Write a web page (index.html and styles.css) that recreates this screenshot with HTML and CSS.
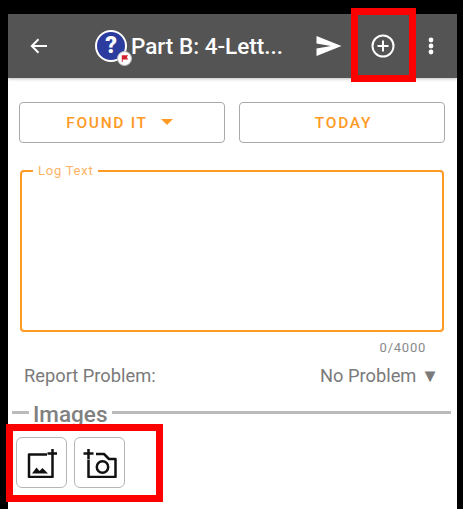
FILE: index.html
```html
<!DOCTYPE html>
<html lang="en">
<head>
<meta charset="utf-8">
<title>Log</title>
<link rel="stylesheet" href="styles.css">
</head>
<body>
<div class="screen">
  <header class="bar">
    <svg class="back" viewBox="0 0 24 24" width="24" height="24"><path d="M20 12H5M11.500 5.200 4.800 12l6.700 6.800" fill="none" stroke="#fff" stroke-width="2"/></svg>
    <div class="type">
      <div class="type-circle">?</div>
      <div class="flag"><svg viewBox="0 0 10 10" width="9" height="9"><path d="M2 1.500h7L7.600 3.600 9 6H3v3H2z" fill="#d3202c"/></svg></div>
    </div>
    <div class="title">Part B: 4-Lett...</div>
    <svg class="send" viewBox="0 0 26 22" width="26" height="22"><path d="M0.500 1 25.500 11 0.500 21V13.500L15 11 0.500 8.500z" fill="#fff"/></svg>
    <svg class="add" viewBox="0 0 24 24" width="24" height="24"><circle cx="12" cy="12" r="10.500" fill="none" stroke="#fff" stroke-width="2"/><path d="M12 6.500v11M6.500 12h11" stroke="#fff" stroke-width="2"/></svg>
    <svg class="more" viewBox="0 0 6 18" width="6" height="18"><circle cx="3" cy="3" r="2.400" fill="#fff"/><circle cx="3" cy="9" r="2.400" fill="#fff"/><circle cx="3" cy="15" r="2.400" fill="#fff"/></svg>
  </header>
  <main class="content">
    <div class="actions">
      <div class="btn btn-menu">FOUND IT<span class="caret"></span></div>
      <div class="btn btn-plain">TODAY</div>
    </div>
    <fieldset class="log">
      <legend>Log Text</legend>
    </fieldset>
    <div class="counter">0/4000</div>
    <div class="problem"><span>Report Problem:</span><span>No Problem ▼</span></div>
    <div class="section"><span class="dash"></span><span class="section-name">Images</span><span class="rule"></span></div>
    <div class="tools">
      <div class="tool">
        <svg viewBox="0 0 30 30" width="30" height="30"><path d="M20 6.500H2V29H25.500V11" fill="none" stroke="#111" stroke-width="2.500" stroke-linejoin="round"/><path d="M25.500 1v10M20.500 5.500h10" stroke="#111" stroke-width="2.500"/><path d="M5 25.500l4.500-6 3 3.500 3-3 5.500 5.500z" fill="#111"/></svg>
      </div>
      <div class="tool">
        <svg viewBox="0 0 34 30" width="34" height="30"><path d="M5.500 11.500V29H32.500V11H26L21 6H13" fill="none" stroke="#111" stroke-width="2.500" stroke-linejoin="round"/><path d="M5.500 1v10M0.500 5.500h10" stroke="#111" stroke-width="2.500"/><circle cx="19.500" cy="19" r="5.700" fill="none" stroke="#111" stroke-width="2.500"/></svg>
      </div>
    </div>
  </main>
</div>
<div class="mark mark-add"></div>
<div class="mark mark-tools"></div>
</body>
</html>
```
FILE: styles.css
```css
* { box-sizing: border-box; }
html, body { margin: 0; height: 100%; }
body { background: #000; font-family: Roboto, "Liberation Sans", sans-serif; overflow: hidden; }
.screen { margin: 14px 6px 0 8px; height: 495px; background: #fff; display: flex; flex-direction: column; }
.bar { height: 64px; flex: none; background: #545454; display: flex; align-items: center; color: #fff; box-shadow: 0 1px 3px rgba(0,0,0,.25); }
.back { margin-left: 19px; }
.type { position: relative; width: 32px; height: 32px; margin-left: 44px; }
.type-circle { width: 32px; height: 32px; border-radius: 50%; background: #2b3b9e; border: 2px solid #fff; color: #fff; font-weight: 900; font-size: 23px; line-height: 27px; text-align: center; }
.flag { position: absolute; right: -5px; bottom: -4px; width: 15px; height: 15px; border-radius: 50%; background: #fff; border: 1px solid #bbb; display: flex; align-items: center; justify-content: center; }
.title { margin-left: 4px; font-size: 22.500px; font-weight: 500; width: 185px; white-space: nowrap; }
.add { margin-left: 29px; }
.more { margin-left: 33px; }
.content { padding: 24px 12px 0 4px; flex: 1; position: relative; }
.actions { display: grid; grid-template-columns: 1fr 1fr; gap: 14px; padding: 0 0 0 7px; }
.btn { height: 41px; border: 1px solid #aaa; border-radius: 4px; color: #ff9a24; font-size: 15.500px; font-weight: 500; letter-spacing: 1.700px; display: flex; align-items: center; justify-content: center; }
.btn-menu { padding-right: 5px; }
.btn-plain { padding-left: 3px; }
.caret { margin-left: 13px; margin-top: -1px; border-left: 6px solid transparent; border-right: 6px solid transparent; border-top: 6px solid #ff9a24; }
.log { margin: 19px 0 0 8px; padding: 0; height: 170px; width: 424px; border: 2px solid #ff9a24; border-radius: 4px; }
.log legend { margin-left: 11px; padding: 0 5px; font-size: 13px; line-height: 17px; color: #fdb366; letter-spacing: .75px; }
.counter { margin-top: 8px; padding-right: 19px; text-align: right; font-size: 13px; line-height: 15px; letter-spacing: .75px; color: #8a8a8a; }
.problem { margin: 11px 0 0 12px; padding-right: 6px; display: flex; justify-content: space-between; font-size: 18.300px; line-height: 20px; color: #7a7a7a; }
.section { margin-top: 16px; display: flex; align-items: flex-start; gap: 4px; margin-right: -6px; }
.dash { width: 17px; height: 3px; background: #bbb; margin-top: 9px; }
.section-name { font-size: 22.500px; line-height: 24px; font-weight: 500; color: #808080; }
.rule { flex: 1; height: 3px; background: #bbb; margin-top: 9px; }
.tools { margin-top: 11px; display: flex; gap: 7px; margin-left: 4px; }
.tool { width: 51px; height: 51px; border: 1px solid #b5b5b5; border-radius: 6px; display: flex; align-items: center; justify-content: center; }
.mark { position: absolute; border: 7px solid #f00; }
.mark-add { left: 351px; top: 8px; width: 65px; height: 74px; }
.mark-tools { left: 6px; top: 424px; width: 157px; height: 78px; }
```
